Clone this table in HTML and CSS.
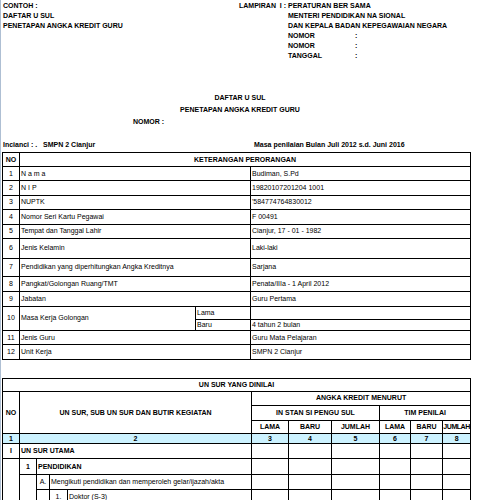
FILE: index.html
```html
<!DOCTYPE html>
<html>
<head>
<meta charset="utf-8">
<link rel="stylesheet" href="styles.css">
</head>
<body>
<div class="page">
  <div class="top">
    <div class="top-left">
      <div class="line b">CONTOH :</div>
      <div class="line b">DAFTAR U SUL</div>
      <div class="line b">PENETAPAN ANGKA KREDIT GURU</div>
    </div>
    <div class="top-right">
      <div class="line b">LAMPIRAN&nbsp; I :</div><div class="line b">PERATURAN BER SAMA</div>
      <div></div><div class="line b">MENTERI PENDIDIKAN NA SIONAL</div>
      <div></div><div class="line b">DAN KEPALA BADAN KEPEGAWAIAN NEGARA</div>
      <div></div><div class="line b kv"><span>NOMOR</span><span>:</span></div>
      <div></div><div class="line b kv"><span>NOMOR</span><span>:</span></div>
      <div></div><div class="line b kv"><span>TANGGAL</span><span>:</span></div>
    </div>
  </div>

  <div class="title">
    <div class="title-line b">DAFTAR U SUL</div>
    <div class="title-line b">PENETAPAN ANGKA KREDIT GURU</div>
    <div class="nomor b">NOMOR :</div>
  </div>

  <div class="instansi">
    <div class="inst-left b">Incianci : .&nbsp;&nbsp; SMPN 2 Cianjur</div>
    <div class="inst-right b">Masa penilaian Bulan Juli 2012 s.d. Juni 2016</div>
  </div>

  <table class="t1">
    <colgroup>
      <col class="c-no"><col class="c-label"><col class="c-sub"><col class="c-val">
    </colgroup>
    <tr class="h-head"><td class="ctr b">NO</td><td colspan="3" class="ctr b">KETERANGAN PERORANGAN</td></tr>
    <tr class="h-a"><td class="ctr">1</td><td colspan="2">N a m a</td><td>Budiman, S.Pd</td></tr>
    <tr class="h-a"><td class="ctr">2</td><td colspan="2">N I P</td><td>19820107201204 1001</td></tr>
    <tr class="h-a"><td class="ctr">3</td><td colspan="2">NUPTK</td><td>'584774764830012</td></tr>
    <tr class="h-a"><td class="ctr">4</td><td colspan="2">Nomor Seri Kartu Pegawai</td><td>F 00491</td></tr>
    <tr class="h-a"><td class="ctr">5</td><td colspan="2">Tempat dan Tanggal Lahir</td><td>Cianjur, 17 - 01 - 1982</td></tr>
    <tr class="h-6"><td class="ctr">6</td><td colspan="2">Jenis Kelamin</td><td>Laki-laki</td></tr>
    <tr class="h-7"><td class="ctr">7</td><td colspan="2">Pendidikan yang diperhitungkan Angka Kreditnya</td><td>Sarjana</td></tr>
    <tr class="h-8"><td class="ctr">8</td><td colspan="2">Pangkat/Golongan Ruang/TMT</td><td>Penata/IIIa - 1 April 2012</td></tr>
    <tr class="h-9"><td class="ctr">9</td><td colspan="2">Jabatan</td><td>Guru Pertama</td></tr>
    <tr class="h-lama"><td class="ctr" rowspan="2">10</td><td rowspan="2">Masa Kerja Golongan</td><td>Lama</td><td></td></tr>
    <tr class="h-baru"><td>Baru</td><td>4 tahun 2 bulan</td></tr>
    <tr class="h-a"><td class="ctr">11</td><td colspan="2">Jenis Guru</td><td>Guru Mata Pelajaran</td></tr>
    <tr class="h-a"><td class="ctr">12</td><td colspan="2">Unit Kerja</td><td>SMPN 2 Cianjur</td></tr>
  </table>

  <table class="t2">
    <colgroup>
      <col class="d-no"><col class="d-1"><col class="d-2"><col class="d-3"><col class="d-4">
      <col class="n1"><col class="n2"><col class="n3"><col class="n4"><col class="n5"><col class="n6">
    </colgroup>
    <tr class="r-13"><td colspan="11" class="ctr b">UN SUR YANG DINILAI</td></tr>
    <tr class="r-14"><td rowspan="3" class="ctr b">NO</td><td rowspan="3" colspan="4" class="ctr b">UN SUR, SUB UN SUR DAN BUTIR KEGIATAN</td><td colspan="6" class="ctr b">ANGKA KREDIT MENURUT</td></tr>
    <tr class="r-15"><td colspan="3" class="ctr b">IN STAN SI PENGU SUL</td><td colspan="3" class="ctr b">TIM PENILAI</td></tr>
    <tr class="r-13"><td class="ctr b">LAMA</td><td class="ctr b">BARU</td><td class="ctr b">JUMLAH</td><td class="ctr b">LAMA</td><td class="ctr b">BARU</td><td class="ctr b tight">JUMLAH</td></tr>
    <tr class="cyan"><td class="ctr b">1</td><td colspan="4" class="ctr b">2</td><td class="ctr b">3</td><td class="ctr b">4</td><td class="ctr b">5</td><td class="ctr b">6</td><td class="ctr b">7</td><td class="ctr b">8</td></tr>
    <tr class="r-15"><td class="ctr b">I</td><td colspan="4" class="b">UN SUR UTAMA</td><td></td><td></td><td></td><td></td><td></td><td></td></tr>
    <tr class="r-16"><td rowspan="3"></td><td class="ctr b">1</td><td colspan="3" class="b">PENDIDIKAN</td><td></td><td></td><td></td><td></td><td></td><td></td></tr>
    <tr class="r-15"><td rowspan="2"></td><td class="ctr">A.</td><td colspan="2">Mengikuti pendidikan dan memperoleh gelar/ijazah/akta</td><td></td><td></td><td></td><td></td><td></td><td></td></tr>
    <tr class="r-15"><td></td><td class="ctr">1.</td><td>Doktor (S-3)</td><td></td><td></td><td></td><td></td><td></td><td></td></tr>
  </table>
</div>
</body>
</html>
```

FILE: styles.css
```css
html, body {
  margin: 0;
  padding: 0;
  background: #fff;
}
body {
  font-family: "Liberation Sans", Arial, sans-serif;
  font-size: 7px;
  color: #000;
  border-left: 1px solid #aebfd3;
  min-height: 500px;
  box-sizing: border-box;
}
.page {
  padding-left: 1px;
  width: 470px;
}
.b { font-weight: bold; }
.line {
  height: 10px;
  line-height: 10px;
  white-space: nowrap;
}
.top {
  display: flex;
  padding-top: 1px;
}
.top-left {
  width: 236px;
  padding-left: 1px;
}
.top-right {
  display: grid;
  grid-template-columns: 49px auto;
}
.kv {
  display: flex;
}
.kv span:first-child {
  width: 67px;
}
.title {
  margin-top: 31px;
}
.title-line {
  text-align: center;
  height: 12px;
  line-height: 12px;
  padding-left: 6px;
}
.nomor {
  height: 12px;
  line-height: 12px;
  padding-left: 131px;
}
.instansi {
  display: flex;
  margin-top: 12px;
  height: 10px;
  line-height: 10px;
}
.inst-left {
  width: 251px;
  padding-left: 1px;
}
table {
  border-collapse: collapse;
  table-layout: fixed;
  width: 468px;
}
td {
  border: 1px solid #000;
  padding: 0;
  text-indent: 1px;
  white-space: nowrap;
  overflow: hidden;
  line-height: 8px;
  vertical-align: middle;
}
.ctr { text-align: center; text-indent: 0; }
.tight { letter-spacing: -0.45px; overflow: visible; }
.t1 { margin-top: 2px; }
.c-no { width: 17px; }
.c-label { width: 176px; }
.c-sub { width: 55px; }
.c-val { width: 220px; }
.t1 tr.h-head td { height: 13px; }
.t1 tr.h-a td { height: 13.4px; }
.t1 tr.h-6 td { height: 18.6px; }
.t1 tr.h-7 td { height: 17.7px; }
.t1 tr.h-8 td { height: 14px; }
.t1 tr.h-9 td { height: 13.7px; }
.t1 tr.h-lama td { height: 12.3px; }
.t1 tr.h-baru td { height: 9.7px; }

.t2 { margin-top: 18px; }
.d-no { width: 17px; }
.d-1 { width: 17px; }
.d-2 { width: 13px; }
.d-3 { width: 18px; }
.d-4 { width: 184px; }
.n1 { width: 37px; }
.n2 { width: 43px; }
.n3 { width: 48px; }
.n4 { width: 31px; }
.n5 { width: 32px; }
.n6 { width: 28px; }
.t2 tr.r-13 td { height: 12.3px; }
.t2 tr.r-14 td { height: 13px; }
.t2 tr.r-15 td { height: 14px; }
.t2 tr.r-16 td { height: 15.3px; }
.t2 tr.cyan td { height: 8.7px; background: #ccf2ff; }
```
